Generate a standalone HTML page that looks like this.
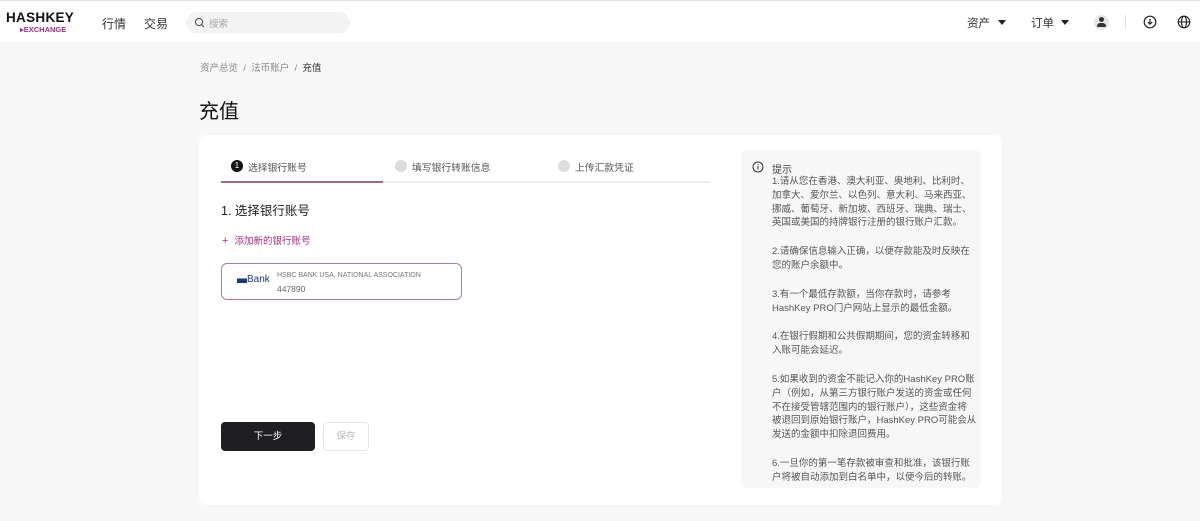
<!DOCTYPE html>
<html><head><meta charset="utf-8"><style>
*{margin:0;padding:0;box-sizing:border-box}
body{width:1200px;height:521px;background:#f7f7f7;font-family:"Liberation Sans","Noto Sans CJK SC",sans-serif;color:#222;position:relative;overflow:hidden}
.hdr{position:absolute;left:0;top:0;width:1200px;height:42px;background:#fff;border-top:1px solid #ddd}
.abs{position:absolute}
.card{position:absolute;left:199px;top:135px;width:803px;height:370px;background:#fff;border-radius:8px}
.tips{position:absolute;left:741px;top:150px;width:240px;height:338px;background:#f7f7f7;border-radius:6px}
.tips p{font-size:9.5px;line-height:13.8px;color:#555;margin-bottom:15px;white-space:nowrap}
</style></head><body>
<div class="hdr">
  <div class="abs" style="left:6px;top:9px;font-weight:bold;font-size:13.5px;letter-spacing:0.3px;color:#111">HASHKEY</div>
  <div class="abs" style="left:20px;top:24px;font-size:7.5px;font-weight:bold;color:#a0307f">▸EXCHANGE</div>
  <div class="abs" style="left:102px;top:14px;font-size:12px;color:#333">行情</div>
  <div class="abs" style="left:144px;top:14px;font-size:12px;color:#333">交易</div>
  <div class="abs" style="left:186px;top:11px;width:164px;height:21px;background:#f3f3f3;border-radius:11px"></div>
  <svg class="abs" style="left:194px;top:16px" width="11" height="11" viewBox="0 0 11 11"><circle cx="5" cy="5" r="3.6" fill="none" stroke="#555" stroke-width="1.1"/><path d="M7.6 7.6L10 10" stroke="#555" stroke-width="1.1"/></svg>
  <div class="abs" style="left:209px;top:15px;font-size:9.5px;color:#aaa">搜索</div>
  <div class="abs" style="left:967px;top:14px;font-size:11.5px;color:#333">资产</div>
  <div class="abs" style="left:998px;top:19px;border-left:4px solid transparent;border-right:4px solid transparent;border-top:5px solid #222"></div>
  <div class="abs" style="left:1031px;top:14px;font-size:11.5px;color:#333">订单</div>
  <div class="abs" style="left:1061px;top:19px;border-left:4px solid transparent;border-right:4px solid transparent;border-top:5px solid #222"></div>
  <div class="abs" style="left:1094px;top:14px;width:15px;height:15px;border-radius:50%;background:#e6e6e6"></div>
  <div class="abs" style="left:1099px;top:16px;width:5px;height:5px;border-radius:50%;background:#333"></div>
  <div class="abs" style="left:1097px;top:22px;width:9px;height:4px;border-radius:4px 4px 1px 1px;background:#333"></div>
  <div class="abs" style="left:1125px;top:14px;width:1px;height:14px;background:#ddd"></div>
  <svg class="abs" style="left:1143px;top:14px" width="14" height="14" viewBox="0 0 14 14"><circle cx="7" cy="7" r="5.8" fill="none" stroke="#222" stroke-width="1.2"/><path d="M7 4v5M4.8 7l2.2 2.2L9.2 7" fill="none" stroke="#222" stroke-width="1.2"/></svg>
  <svg class="abs" style="left:1177px;top:14px" width="14" height="14" viewBox="0 0 14 14"><g fill="none" stroke="#222" stroke-width="1.1"><circle cx="7" cy="7" r="5.8"/><ellipse cx="7" cy="7" rx="2.5" ry="5.8"/><path d="M1.2 7h11.6"/></g></svg>
</div>
<div class="abs" style="left:200px;top:60px;font-size:9.5px;color:#888">资产总览 &nbsp;/&nbsp; 法币账户 &nbsp;/&nbsp; <span style="color:#333">充值</span></div>
<div class="abs" style="left:199px;top:95px;font-size:20px;color:#111">充值</div>
<div class="card"></div>
<div class="abs" style="left:231px;top:160px;width:12px;height:12px;border-radius:50%;background:#111;color:#fff;font-size:8px;text-align:center;line-height:12px">1</div>
<div class="abs" style="left:248px;top:160px;font-size:9.8px;color:#555">选择银行账号</div>
<div class="abs" style="left:395px;top:160px;width:12px;height:12px;border-radius:50%;background:#ddd"></div>
<div class="abs" style="left:412px;top:160px;font-size:9.8px;color:#555">填写银行转账信息</div>
<div class="abs" style="left:558px;top:160px;width:12px;height:12px;border-radius:50%;background:#ddd"></div>
<div class="abs" style="left:575px;top:160px;font-size:9.8px;color:#555">上传汇款凭证</div>
<div class="abs" style="left:221px;top:181px;width:489px;height:2px;background:#eee"></div>
<div class="abs" style="left:221px;top:181px;width:162px;height:2px;background:#9a6a90"></div>
<div class="abs" style="left:221px;top:200px;font-size:12.5px;color:#222">1. 选择银行账号</div>
<div class="abs" style="left:222px;top:233px;font-size:11px;color:#a0307f">+ &nbsp;<span style="font-size:9.5px">添加新的银行账号</span></div>
<div class="abs" style="left:221px;top:263px;width:241px;height:37px;border:1.5px solid #b07aa5;border-radius:6px"></div>
<div class="abs" style="left:237px;top:278px;width:10px;height:5px;background:#1a3a7a;border-top:1px solid #7a9ad0"></div>
<div class="abs" style="left:247px;top:274px;font-size:10px;color:#1a3a7a">Bank</div>
<div class="abs" style="left:277px;top:272px;font-size:7px;color:#777">HSBC BANK USA, NATIONAL ASSOCIATION</div>
<div class="abs" style="left:277px;top:284px;font-size:8.5px;color:#666">447890</div>
<div class="abs" style="left:221px;top:422px;width:94px;height:29px;background:#1f1f23;border-radius:4px;color:#fff;font-size:9.5px;text-align:center;line-height:29px">下一步</div>
<div class="abs" style="left:323px;top:422px;width:46px;height:29px;border:1px solid #e6e6e6;border-radius:4px;color:#bbb;font-size:9.5px;text-align:center;line-height:27px">保存</div>
<div class="tips">
  <svg class="abs" style="left:11px;top:11px" width="12" height="12" viewBox="0 0 12 12"><circle cx="6" cy="6" r="5" fill="none" stroke="#333" stroke-width="1"/><path d="M6 5v3.5M6 3.3v.8" stroke="#333" stroke-width="1"/></svg>
  <div class="abs" style="left:31px;top:11px;font-size:10px;color:#444">提示</div>
  <div class="abs" style="left:31px;top:25px">
    <p>1.请从您在香港、澳大利亚、奥地利、比利时、<br>加拿大、爱尔兰、以色列、意大利、马来西亚、<br>挪威、葡萄牙、新加坡、西班牙、瑞典、瑞士、<br>英国或美国的持牌银行注册的银行账户汇款。</p>
    <p>2.请确保信息输入正确，以便存款能及时反映在<br>您的账户余额中。</p>
    <p>3.有一个最低存款额，当你存款时，请参考<br>HashKey PRO门户网站上显示的最低金额。</p>
    <p>4.在银行假期和公共假期期间，您的资金转移和<br>入账可能会延迟。</p>
    <p>5.如果收到的资金不能记入你的HashKey PRO账<br>户（例如，从第三方银行账户发送的资金或任何<br>不在接受管辖范围内的银行账户），这些资金将<br>被退回到原始银行账户，HashKey PRO可能会从<br>发送的金额中扣除退回费用。</p>
    <p>6.一旦你的第一笔存款被审查和批准，该银行账<br>户将被自动添加到白名单中，以便今后的转账。</p>
  </div>
</div>
</body></html>
